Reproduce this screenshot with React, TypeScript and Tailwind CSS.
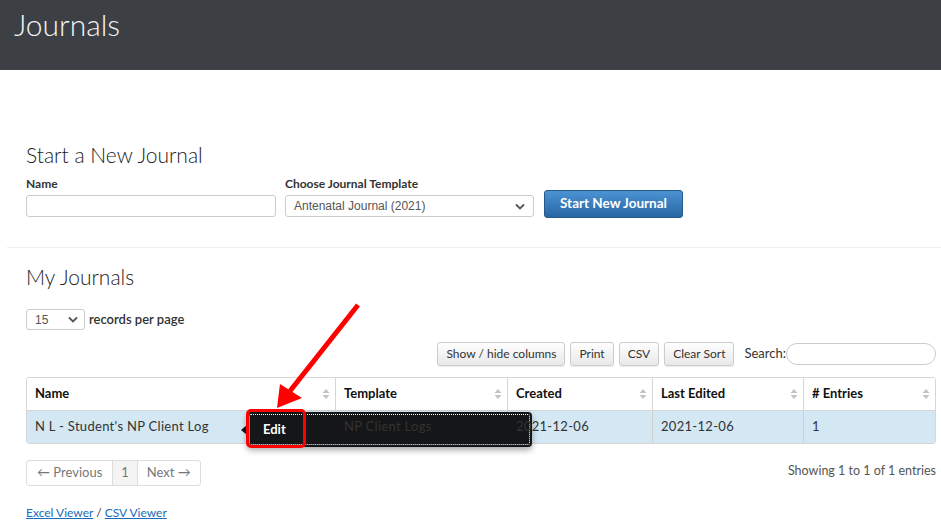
import React from 'react';

const SortIcon = () => (
  <svg width="8" height="12" viewBox="0 0 8 12" className="shrink-0">
    <path d="M4 1 L7.5 5 L0.5 5 Z" fill="#c4c4c4" />
    <path d="M4 11 L7.5 7 L0.5 7 Z" fill="#c4c4c4" />
  </svg>
);

const Chevron = () => (
  <svg width="10" height="7" viewBox="0 0 10 7" className="shrink-0">
    <path d="M1 1.5 L5 5.5 L9 1.5" stroke="#555" strokeWidth="1.8" fill="none" />
  </svg>
);

const columns = [
  { label: 'Name', w: 'w-[309px]' },
  { label: 'Template', w: 'w-[172px]' },
  { label: 'Created', w: 'w-[145px]' },
  { label: 'Last Edited', w: 'w-[151px]' },
  { label: '# Entries', w: 'flex-1' },
];

const row = ["N L - Student's NP Client Log", 'NP Client Logs', '2021-12-06', '2021-12-06', '1'];

const App = () => {
  return (
    <div className="relative w-[941px] h-[525px] overflow-hidden bg-white text-[13px] text-[#333]" style={{ fontFamily: 'Lato, "Open Sans", sans-serif' }}>
      {/* header */}
      <div className="h-[70px] bg-[#3c3f44] pl-[14px] pt-[5px]">
        <h1 className="text-[30px] font-light text-[#f4f4f4] leading-[38px]">Journals</h1>
      </div>

      <div className="pl-[7px]">
        {/* start new journal */}
        <div className="pl-[19px] pt-[72px]">
          <h2 className="text-[21px] font-light text-[#222] leading-[25px]">Start a New Journal</h2>
          <div className="flex items-end mt-[9px]">
            <div className="flex flex-col">
              <label className="text-[12px] font-bold text-[#333] leading-[15px] mb-[4px]">Name</label>
              <div className="w-[250px] h-[22px] border border-[#ccc] rounded-[3px] bg-white" />
            </div>
            <div className="flex flex-col ml-[9px]">
              <label className="text-[12px] font-bold text-[#333] leading-[15px] mb-[4px]">Choose Journal Template</label>
              <div className="w-[249px] h-[22px] border border-[#ccc] rounded-[3px] bg-white flex items-center justify-between pl-[8px] pr-[8px]">
                <span className="text-[12px] text-[#555]" style={{ fontFamily: '"Liberation Sans", Arial, sans-serif' }}>Antenatal Journal (2021)</span>
                <Chevron />
              </div>
            </div>
            <button className="ml-[10px] mb-[-1px] h-[28px] px-[15px] rounded-[3px] border border-[#25598a] bg-gradient-to-b from-[#4b93d4] to-[#2867a3] text-white text-[13.5px] font-bold leading-none">
              Start New Journal
            </button>
          </div>
        </div>

        <div className="mt-[30px] h-px bg-[#eee]" />

        {/* my journals */}
        <div className="pl-[19px] pr-[5px] pt-[16px]">
          <h2 className="text-[21px] font-light text-[#222] leading-[25px]">My Journals</h2>
          <div className="flex items-center mt-[20px]">
            <div className="w-[59px] h-[21px] border border-[#ccc] rounded-[3px] flex items-center justify-between pl-[8px] pr-[6px]">
              <span className="text-[12px] text-[#555]" style={{ fontFamily: '"Liberation Sans", Arial, sans-serif' }}>15</span>
              <Chevron />
            </div>
            <span className="ml-[4px] text-[13px] font-semibold text-[#333]">records per page</span>
          </div>

          <div className="flex items-center justify-end mt-[12px]">
            <div className="flex gap-[5px]">
              {['Show / hide columns', 'Print', 'CSV', 'Clear Sort'].map((b) => (
                <button
                  key={b}
                  className="h-[24px] px-[8px] rounded-[3px] border border-[#ccc] bg-gradient-to-b from-white to-[#e8e8e8] text-[12px] text-[#333] leading-none shadow-[0_1px_1px_rgba(0,0,0,0.08)]"
                >
                  {b}
                </button>
              ))}
            </div>
            <span className="ml-[10px] text-[13px] text-[#333]">Search:</span>
            <div className="w-[150px] h-[22px] border border-[#ccc] rounded-full bg-white" />
          </div>

          {/* table */}
          <div className="mt-[11px] border border-[#d6d6d6] rounded-[3px] overflow-hidden">
            <div className="flex h-[33px] bg-white border-b border-[#d6d6d6]">
              {columns.map((c, i) => (
                <div
                  key={c.label}
                  className={`${c.w} flex items-center justify-between pl-[8px] pr-[5px] ${i < columns.length - 1 ? 'border-r border-[#d6d6d6]' : ''}`}
                >
                  <span className="text-[13px] font-bold text-[#111]">{c.label}</span>
                  <SortIcon />
                </div>
              ))}
            </div>
            <div className="flex h-[32px] bg-[#d3e8f3]">
              {columns.map((c, i) => (
                <div
                  key={c.label}
                  className={`${c.w} flex items-center pl-[8px] ${i < columns.length - 1 ? 'border-r border-[#d0d0d0]' : ''}`}
                >
                  <span className="relative z-10 text-[13px] text-[#333] tracking-[0.3px]">{row[i]}</span>
                </div>
              ))}
            </div>
          </div>

          {/* pagination */}
          <div className="flex items-start justify-between mt-[16px]">
            <div className="flex h-[26px] border border-[#ddd] rounded-[3px] text-[13px] text-[#777]">
              <span className="px-[10px] flex items-center border-r border-[#ddd]">← Previous</span>
              <span className="px-[8px] flex items-center bg-[#f4f4f4] border-r border-[#ddd]">1</span>
              <span className="px-[9px] flex items-center">Next →</span>
            </div>
            <span className="text-[12.5px] text-[#555] mt-[2px]">Showing 1 to 1 of 1 entries</span>
          </div>

          <div className="mt-[18px] text-[12px] text-[#333]">
            <a className="text-[#1a6bb8] underline">Excel Viewer</a> / <a className="text-[#1a6bb8] underline">CSV Viewer</a>
          </div>
        </div>
      </div>

      {/* tooltip menu over the row */}
      <div className="absolute left-[247px] top-[412px] w-[285px] h-[35px] rounded-[4px] bg-[#141618] shadow-[0_3px_6px_rgba(0,0,0,0.35)] p-[2px]">
        <div className="w-full h-full border border-dotted border-white rounded-[2px] flex items-center pl-[13px]">
          <span className="text-[13px] font-bold text-white">Edit</span>
        </div>
        <div className="absolute -left-[6px] top-[13px] w-0 h-0 border-y-[5px] border-y-transparent border-r-[6px] border-r-[#141618]" />
      </div>
      <div className="absolute z-20 left-[246px] top-[409px] w-[60px] h-[39px] border-[3px] border-[#ff0000] rounded-[5px]" />

      {/* red arrow */}
      <svg className="absolute z-20 left-0 top-0 pointer-events-none" width="941" height="525">
        <line x1="358" y1="305" x2="290" y2="391" stroke="#ff0000" strokeWidth="5" />
        <polygon points="277,408 280,384 302,398" fill="#ff0000" />
      </svg>
    </div>
  );
};

export default App;
